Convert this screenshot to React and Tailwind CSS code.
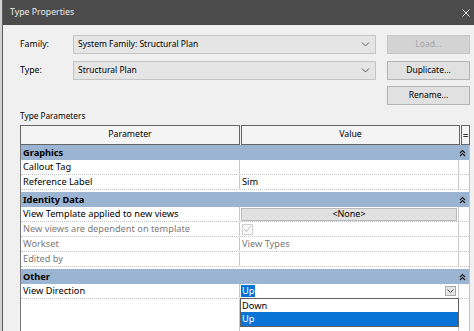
import React from "react";

// Type Properties dialog (Revit style)
const font = "font-['Noto_Sans',sans-serif]";

const DoubleUp = () => (
  <svg width="7" height="8" viewBox="0 0 7 8" fill="none" stroke="#1f1f1f" strokeWidth="1.2">
    <path d="M1 4 L3.5 1.5 L6 4" />
    <path d="M1 7 L3.5 4.5 L6 7" />
  </svg>
);

const ComboChevron = () => (
  <svg width="9" height="5" viewBox="0 0 9 5" fill="none" stroke="#5a5a5a" strokeWidth="1">
    <path d="M1 0.5 L4.5 4 L8 0.5" />
  </svg>
);

const Combo = ({ text }) => (
  <div className="w-[303px] h-[19px] flex items-center justify-between bg-[#e5e5e5] border border-[#c4c4c4] pl-[4px] pr-[5px]">
    <span className="text-[8.5px] text-black">{text}</span>
    <ComboChevron />
  </div>
);

const Button = ({ children, disabled }) => (
  <div
    className={
      disabled
        ? "ml-[11px] w-[83px] h-[19px] flex items-center justify-center bg-[#d3d3d3] border border-[#c6c6c6] text-[8.5px] text-[#a3a3a3]"
        : "ml-[11px] w-[83px] h-[19px] flex items-center justify-center bg-[#e1e1e1] border border-[#b4b4b4] text-[8.5px] text-black"
    }
  >
    {children}
  </div>
);

const Band = ({ title, gap = true }) => (
  <>
    {gap && <div className="h-[2px] bg-white" />}
    <div className="h-[15px] flex items-center justify-between bg-[#9bb4d2] pl-[2px] pr-[3px]">
      <span className="text-[9.25px] font-bold text-black">{title}</span>
      <DoubleUp />
    </div>
  </>
);

const Row = ({ label, muted, children }) => (
  <div className="h-[15px] flex border-b border-dotted border-[#c4c4c4]">
    <div
      className={
        "w-[219px] border-r border-[#c9c9c9] pl-[2px] flex items-center text-[9.25px] " +
        (muted ? "text-[#7a7a7a]" : "text-black")
      }
    >
      {label}
    </div>
    <div className="relative w-[219px] border-r border-[#c9c9c9] flex items-center">{children}</div>
    <div className="flex-1" />
  </div>
);

export default function App() {
  return (
    <div className={"w-[474px] h-[331px] overflow-hidden flex bg-[#d6d6d6] " + font}>
      <div className="w-[2px] bg-[#d2d2d2]" />
      <div className="flex-1 flex flex-col border-l border-[#5e5e5e] bg-[#f0f0f0]">
        {/* title bar */}
        <div className="h-[25px] shrink-0 flex items-center justify-between bg-[#4b4b4b] pl-[7px] pr-[4px]">
          <span className="text-[8.75px] text-[#ececec]">Type Properties</span>
          <svg width="8" height="8" viewBox="0 0 8 8" stroke="#e4e4e4" strokeWidth="1">
            <path d="M0.5 0.5 L7.5 7.5 M7.5 0.5 L0.5 7.5" />
          </svg>
        </div>

        <div className="flex-1 flex flex-col pl-[17px] pt-[10px]">
          <div className="flex items-center">
            <span className="w-[53px] text-[8.75px] text-black">Family:</span>
            <Combo text="System Family: Structural Plan" />
            <Button disabled>Load...</Button>
          </div>
          <div className="flex items-center mt-[7px]">
            <span className="w-[53px] text-[8.75px] text-black">Type:</span>
            <Combo text="Structural Plan" />
            <Button>Duplicate...</Button>
          </div>
          <div className="flex items-center mt-[6px]">
            <div className="w-[356px]" />
            <Button>Rename...</Button>
          </div>

          <div className="mt-[4px] h-[14px] flex items-center text-[8.25px] text-black">Type Parameters</div>

          {/* table */}
          <div className="mt-[2px] w-[451px] flex-1 flex flex-col">
            <div className="h-[20px] flex gap-[1px]">
              <div className="w-[220px] flex items-center justify-center border border-[#666] bg-[#f4f4f4] text-[8.75px] text-black">
                Parameter
              </div>
              <div className="w-[219px] flex items-center justify-center border border-[#666] bg-[#f4f4f4] text-[8.75px] text-black">
                Value
              </div>
              <div className="w-[9px] flex items-center justify-center border border-[#666] bg-[#f4f4f4] text-[10px] leading-none text-[#333]">
                =
              </div>
            </div>

            <div className="flex-1 flex flex-col w-[450px] bg-white border-l border-[#777] border-r border-r-[#c4c4c4]">
              <Band title="Graphics" gap={false} />
              <Row label="Callout Tag" />
              <Row label="Reference Label">
                <span className="pl-[2px] text-[9.25px] text-black">Sim</span>
              </Row>
              <Band title="Identity Data" />
              <Row label="View Template applied to new views">
                <div className="ml-[1px] w-[216px] h-[13px] flex items-center justify-center bg-[#e1e1e1] border border-[#b8b8b8] text-[9px] text-black">
                  &lt;None&gt;
                </div>
              </Row>
              <Row label="New views are dependent on template" muted>
                <div className="ml-[2px] w-[11px] h-[11px] border border-[#cfcfcf] bg-[#fafafa] flex items-center justify-center">
                  <svg width="9" height="8" viewBox="0 0 9 8" fill="none" stroke="#bcbcbc" strokeWidth="1">
                    <path d="M1 4 L3.5 6.5 L8 1" />
                  </svg>
                </div>
              </Row>
              <Row label="Workset" muted>
                <span className="pl-[2px] text-[9.25px] text-[#7a7a7a]">View Types</span>
              </Row>
              <Row label="Edited by" muted />
              <Band title="Other" />
              <Row label="View Direction">
                <div className="flex-1 flex items-center justify-between pr-[2px]">
                  <span className="ml-[1px] px-[1px] bg-[#0a74d6] text-white text-[9.25px] leading-[12px]">Up</span>
                  <div className="w-[11px] h-[10px] flex items-center justify-center bg-[#e6e6e6] border border-[#a9a9a9]">
                    <svg width="7" height="4" viewBox="0 0 7 4" fill="none" stroke="#444" strokeWidth="1">
                      <path d="M0.5 0.5 L3.5 3.5 L6.5 0.5" />
                    </svg>
                  </div>
                </div>
                {/* open dropdown list */}
                <div className="absolute left-0 top-[14px] z-10 w-[219px] h-[29px] flex flex-col bg-white border border-[#5f5f5f]">
                  <div className="h-[13px] pl-[1px] flex items-center text-[9.25px] text-black">Down</div>
                  <div className="h-[14px] pl-[1px] flex items-center bg-[#0a74d6] text-[9.25px] text-white">Up</div>
                </div>
              </Row>
              <div className="flex-1 flex">
                <div className="w-[219px] border-r border-[#c9c9c9]" />
                <div className="w-[219px] border-r border-[#c9c9c9]" />
              </div>
            </div>
          </div>
        </div>
      </div>
    </div>
  );
}
